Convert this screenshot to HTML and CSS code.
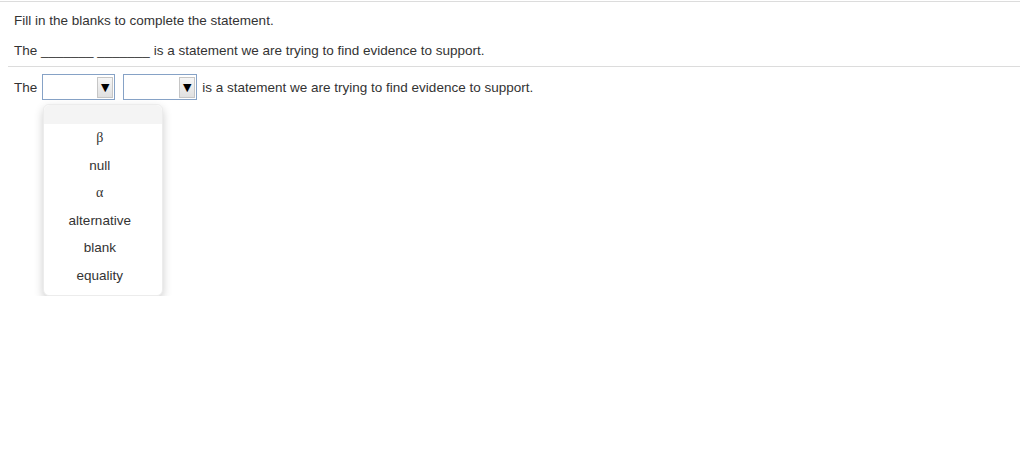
FILE: index.html
```html
<!DOCTYPE html>
<html>
<head>
<meta charset="utf-8">
<link rel="stylesheet" href="styles.css">
</head>
<body>
<div class="page">
  <div class="question">
    <p class="prompt">Fill in the blanks to complete the statement.</p>
    <p class="statement">The _______ _______ is a statement we are trying to find evidence to support.</p>
  </div>
  <div class="answer">
    <div class="row">
      <span class="word lead">The</span>
      <div class="select-wrap">
        <div class="select"><span class="btn">&#9660;</span></div>
        <div class="menu">
          <div class="item active"></div>
          <div class="item greek">β</div>
          <div class="item">null</div>
          <div class="item greek">α</div>
          <div class="item">alternative</div>
          <div class="item">blank</div>
          <div class="item">equality</div>
        </div>
      </div>
      <div class="select second"><span class="btn">&#9660;</span></div>
      <span class="word">is a statement we are trying to find evidence to support.</span>
    </div>
  </div>
</div>
</body>
</html>
```
FILE: styles.css
```css
html, body {
  margin: 0;
  padding: 0;
  background: #fff;
}
body {
  font-family: "Liberation Sans", Arial, sans-serif;
  font-size: 13.5px;
  color: #333;
}
.page {
  padding-top: 1px;
}
.question {
  border-top: 1px solid #dcdcdc;
  padding: 0 14px;
  margin-right: 4px;
}
.prompt {
  margin: 11px 0 0;
  line-height: 15px;
}
.statement {
  margin: 15px 0 0;
  line-height: 15px;
}
.answer {
  margin: 8px 4px 0 8px;
  border-top: 1px solid #dcdcdc;
  padding: 7px 6px 0;
}
.row {
  display: flex;
  align-items: flex-start;
}
.word {
  line-height: 26px;
  padding-top: 1px;
}
.lead {
  margin-right: 5px;
}
.select-wrap {
  width: 73px;
  flex-shrink: 0;
  margin-right: 8px;
}
.select {
  box-sizing: border-box;
  width: 73px;
  height: 26px;
  border: 1px solid #86a2c6;
  background: #fff;
  display: flex;
  align-items: center;
  justify-content: flex-end;
  padding-right: 1px;
}
.second {
  width: 74px;
  flex-shrink: 0;
  margin-right: 5px;
}
.btn {
  box-sizing: border-box;
  width: 16px;
  height: 21px;
  border: 1px solid #c6c6c6;
  background: linear-gradient(#f6f6f6, #e0e0e0);
  color: #000;
  font-family: "DejaVu Sans", sans-serif;
  font-size: 11px;
  display: flex;
  align-items: center;
  justify-content: center;
  line-height: 1;
}
.menu {
  box-sizing: border-box;
  margin: 4px 0 0 1px;
  width: 120px;
  padding: 0 0 6px;
  background: #fff;
  border: 1px solid #ececec;
  border-radius: 6px;
  box-shadow: 0 4px 10px rgba(0, 0, 0, 0.2);
}
.item {
  height: 27.5px;
  line-height: 27.5px;
  text-align: center;
  padding-right: 7px;
  color: #333;
  white-space: nowrap;
}
.item.active {
  height: 19px;
  padding-right: 0;
  background: #f4f4f4;
  border-radius: 6px 6px 0 0;
}
.item.greek {
  font-family: "Liberation Serif", "Times New Roman", serif;
  font-size: 14px;
}
```
